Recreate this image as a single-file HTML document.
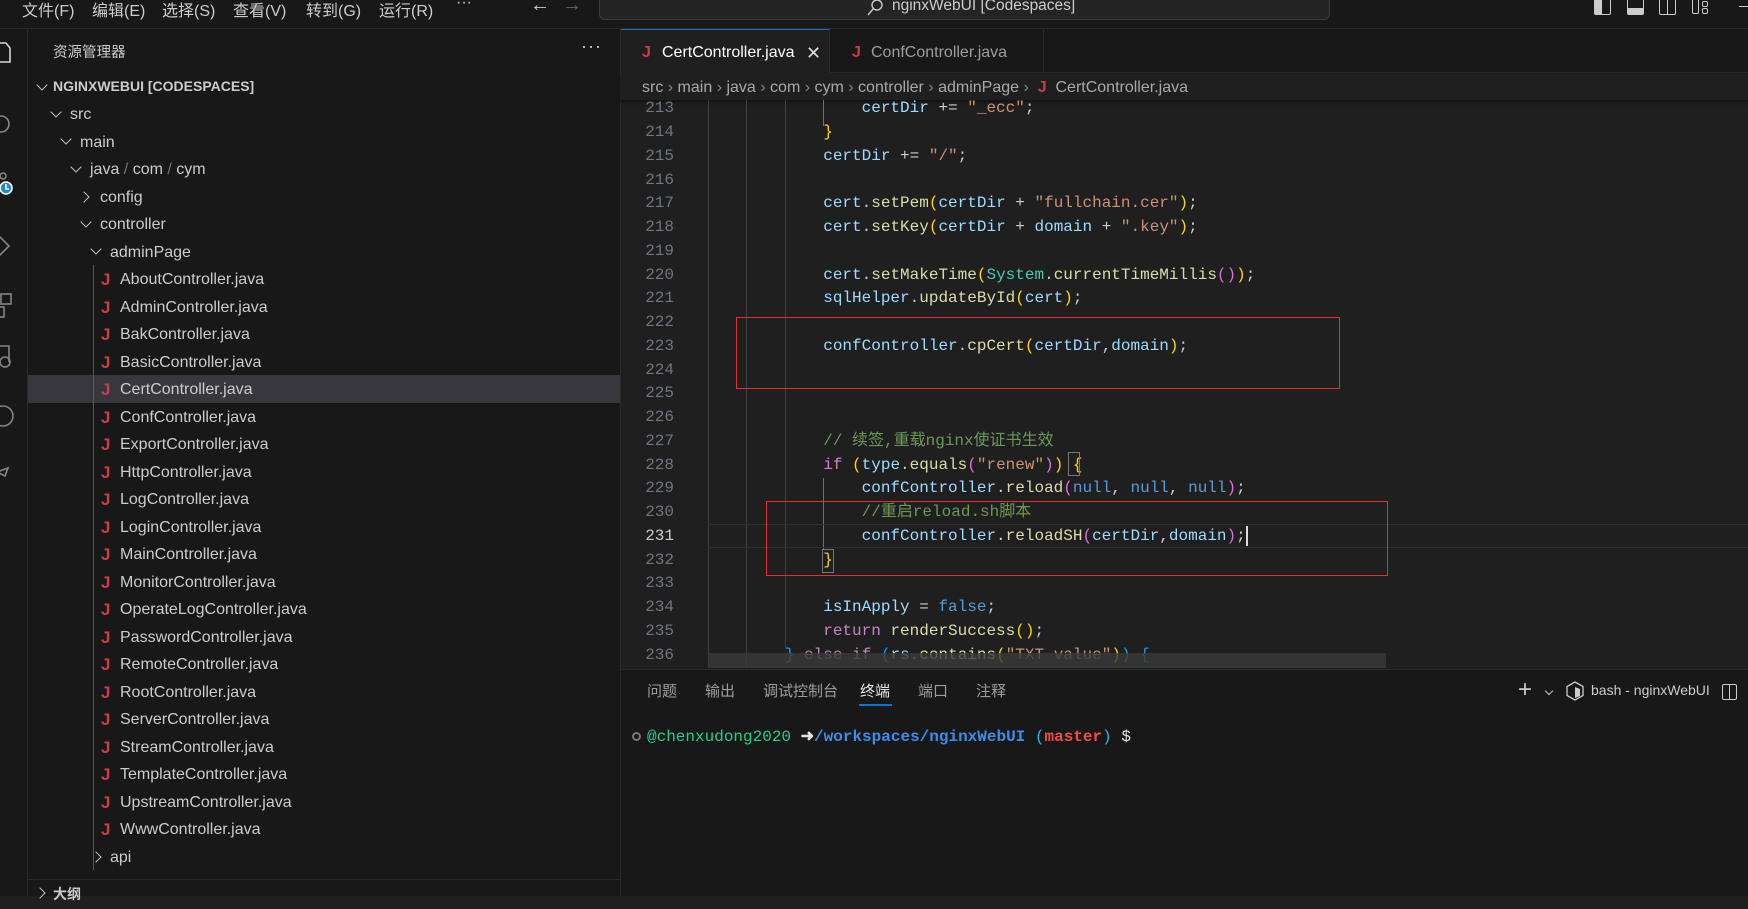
<!DOCTYPE html>
<html><head><meta charset="utf-8">
<style>
*{margin:0;padding:0;box-sizing:border-box}
body{width:1748px;height:896px;overflow:hidden;background:#1f1f1f;font-family:"Liberation Sans","Noto Sans CJK SC",sans-serif;color:#cccccc;position:relative}
.abs{position:absolute}
.title{left:0;top:0;width:1748px;height:29px;background:#181818;border-bottom:1px solid #2b2b2b}
.menu{top:-3px;font-size:16px;color:#cccccc}
.act{left:0;top:29px;width:28px;height:867px;background:#181818;border-right:1px solid #2b2b2b}
.side{left:28px;top:29px;width:593px;height:867px;background:#181818;border-right:1px solid #2b2b2b}
.row{position:absolute;height:27.5px;line-height:27.5px;font-size:16px;color:#cccccc;white-space:nowrap}
.chev{position:absolute;width:8px;height:8px;border-right:1.4px solid #c5c5c5;border-bottom:1.4px solid #c5c5c5}
.down{transform:rotate(45deg)}
.right{transform:rotate(-45deg)}
.J{color:#cc3e44;font-weight:bold;font-size:17px;position:absolute}
.tabs{left:621px;top:29px;width:1127px;height:44px;background:#181818;border-bottom:1px solid #2b2b2b}
.tab{position:absolute;top:0;height:44px;line-height:44px;font-size:16px}
.bc{left:621px;top:73px;width:1127px;height:27px;background:#1f1f1f;font-size:16px;color:#a9a9a9;line-height:29px;box-shadow:0 2px 3px #111}
.ln{position:absolute;left:630px;width:44px;text-align:right;font-family:"Liberation Mono",monospace;font-size:16px;color:#6e7681;height:23.75px;line-height:23.75px}
.cl{position:absolute;left:708px;font-family:"Liberation Mono","Noto Sans CJK SC",monospace;font-size:16px;white-space:pre;height:23.75px;line-height:23.75px;color:#cccccc}
.v{color:#9cdcfe}.f{color:#dcdcaa}.s{color:#ce9178}.k{color:#569cd6}.c{color:#c586c0}.cm{color:#6a9955}.t{color:#4ec9b0}.g{color:#ffd700}.p{color:#da70d6}.b{color:#179fff}
.guide{position:absolute;width:1px;background:#404040}
.panel{left:621px;top:669px;width:1127px;height:227px;background:#181818;border-top:1px solid #2b2b2b}
.ptab{position:absolute;top:10px;font-size:15px;color:#9d9d9d}
.term{position:absolute;top:56px;font-family:"Liberation Mono",monospace;font-size:16px;white-space:pre}
</style></head><body>
<div class="abs title"></div>
<div class="abs menu" style="left:22px">文件(F)</div>
<div class="abs menu" style="left:92px">编辑(E)</div>
<div class="abs menu" style="left:162px">选择(S)</div>
<div class="abs menu" style="left:233px">查看(V)</div>
<div class="abs menu" style="left:306px">转到(G)</div>
<div class="abs menu" style="left:379px">运行(R)</div>
<div class="abs menu" style="left:456px;top:-6px">···</div>
<div class="abs" style="left:530px;top:-6px;font-size:20px;color:#ccc">←</div>
<div class="abs" style="left:562px;top:-6px;font-size:20px;color:#666">→</div>
<div class="abs" style="left:599px;top:-6px;width:731px;height:26px;border:1px solid #3c3c3c;border-radius:6px;background:#242424"></div>
<svg class="abs" style="left:866px;top:0" width="18" height="16"><circle cx="11" cy="5" r="5" fill="none" stroke="#ccc" stroke-width="1.4"/><line x1="7" y1="9" x2="2" y2="15" stroke="#ccc" stroke-width="1.4"/></svg>
<div class="abs" style="left:892px;top:-3px;font-size:15.5px;color:#ccc">nginxWebUI [Codespaces]</div>
<div class="abs" style="left:1594px;top:-4px;width:17px;height:19px;border:1.4px solid #ccc;border-radius:2px;border-left:8px solid #ccc"></div>
<div class="abs" style="left:1627px;top:-4px;width:17px;height:19px;border:1.4px solid #ccc;border-radius:2px;border-bottom:7px solid #ccc"></div>
<div class="abs" style="left:1659px;top:-4px;width:17px;height:19px;border:1.4px solid #ccc;border-radius:2px"></div>
<div class="abs" style="left:1667px;top:-4px;width:1.4px;height:19px;background:#ccc"></div>
<div class="abs" style="left:1692px;top:-4px;width:7px;height:18px;border:1.4px solid #ccc;border-radius:2px"></div>
<div class="abs" style="left:1702px;top:1px;width:6px;height:6px;border:1.4px solid #ccc;border-radius:2px"></div>
<div class="abs" style="left:1702px;top:8px;width:6px;height:6px;border:1.4px solid #ccc;border-radius:2px"></div>
<div class="abs" style="left:1739px;top:6px;width:9px;height:1px;background:#ccc"></div>

<div class="abs act"></div>
<svg class="abs" style="left:0;top:40px" width="28" height="460" fill="none" stroke="#858585" stroke-width="1.6">
<path d="M-4 3 H6 L10 8 V22 H-4" stroke="#d7d7d7"/>
<circle cx="1" cy="84" r="8"/>
<circle cx="3" cy="136" r="3"/><circle cx="6" cy="148" r="6" fill="#1f8ad2" stroke="#fff"/><path d="M6 144 V149 H9" stroke="#fff"/>
<path d="M-2 195 L9 206 L-2 217"/>
<rect x="1" y="254" width="10" height="10"/><rect x="-4" y="267" width="8" height="10"/>
<path d="M-4 306 H9 V322"/><circle cx="5" cy="322" r="5"/>
<circle cx="3" cy="376" r="10"/>
<path d="M-3 432 L8 428 L5 436 Z"/>
</svg>

<div class="abs side"></div>
<div class="abs" style="left:53px;top:41px;font-size:14.5px;color:#ccc">资源管理器</div>
<div class="abs" style="left:581px;top:36px;font-size:18px;color:#ccc;letter-spacing:1px">···</div>
<div class="chev down" style="left:38px;top:81px"></div>
<div class="row" style="left:53px;top:73px;font-weight:bold;font-size:14px">NGINXWEBUI [CODESPACES]</div>

<div class="chev down" style="left:52px;top:108px"></div><div class="row" style="left:70px;top:101px">src</div>
<div class="chev down" style="left:62px;top:135px"></div><div class="row" style="left:80px;top:128.5px">main</div>
<div class="chev down" style="left:72px;top:163px"></div><div class="row" style="left:90px;top:156px">java <span style="color:#777">/</span> com <span style="color:#777">/</span> cym</div>
<div class="chev right" style="left:80px;top:193px"></div><div class="row" style="left:100px;top:183.5px">config</div>
<div class="chev down" style="left:82px;top:218px"></div><div class="row" style="left:100px;top:211px">controller</div>
<div class="chev down" style="left:92px;top:245px"></div><div class="row" style="left:110px;top:238.5px">adminPage</div>
<div class="abs" style="left:28px;top:375px;width:592px;height:27.5px;background:#37373d"></div>
<div class="guide" style="left:93px;top:265px;height:605px;background:#585858"></div>

<div id="files"></div>
<div class="chev right" style="left:92px;top:853px"></div><div class="row" style="left:110px;top:844px">api</div>
<div class="abs" style="left:28px;top:879px;width:593px;height:1px;background:#2b2b2b"></div>
<div class="chev right" style="left:36px;top:889px"></div><div class="row" style="left:53px;top:881px;font-weight:bold;font-size:14px">大纲</div>

<div class="abs tabs"></div>
<div class="abs" style="left:621px;top:29px;width:209px;height:45px;background:#1f1f1f;border-top:1px solid #0078d4;border-right:1px solid #2b2b2b"></div>
<div class="tab J" style="left:642px;top:31px;line-height:44px">J</div>
<div class="tab" style="left:662px;top:31px;color:#fff">CertController.java</div>
<div class="tab" style="left:806px;top:31px;color:#ddd;font-size:18px">✕</div>
<div class="abs" style="left:1043px;top:29px;width:1px;height:44px;background:#2b2b2b"></div>
<div class="tab J" style="left:852px;top:31px;line-height:44px">J</div>
<div class="tab" style="left:871px;top:31px;color:#9d9d9d">ConfController.java</div>

<div class="abs bc"><span style="position:absolute;left:21px;white-space:pre">src <span style="color:#888">›</span> main <span style="color:#888">›</span> java <span style="color:#888">›</span> com <span style="color:#888">›</span> cym <span style="color:#888">›</span> controller <span style="color:#888">›</span> adminPage <span style="color:#888">›</span>  <b style="color:#cc3e44">J</b>  CertController.java</span></div>

<div class="guide" style="left:708px;top:100px;height:568px"></div>
<div class="guide" style="left:746px;top:100px;height:568px"></div>
<div class="guide" style="left:785px;top:100px;height:548px"></div>
<div class="guide" style="left:823px;top:100px;height:26px;background:#707070"></div>
<div class="guide" style="left:823px;top:478px;height:71px;background:#707070"></div>
<div class="abs" style="left:708px;top:524px;width:1040px;height:24px;border-top:1px solid #303030;border-bottom:1px solid #303030"></div>

<div id="code"></div>

<div class="abs" style="left:708px;top:653px;width:678px;height:15px;background:#3a3a3a;opacity:.8"></div>
<div class="abs" style="left:736px;top:317px;width:604px;height:72px;border:1px solid #e03030"></div>
<div class="abs" style="left:766px;top:501px;width:622px;height:75px;border:1px solid #e03030"></div>
<div class="abs" style="left:1068px;top:452px;width:12px;height:24px;border:1px solid #777"></div>
<div class="abs" style="left:822px;top:549px;width:12px;height:24px;border:1px solid #777"></div>
<div class="abs" style="left:1246px;top:526px;width:2px;height:20px;background:#ddd"></div>

<div class="abs panel">
<div class="ptab" style="left:26px">问题</div>
<div class="ptab" style="left:84px">输出</div>
<div class="ptab" style="left:142px">调试控制台</div>
<div class="ptab" style="left:239px;color:#e7e7e7">终端</div>
<div class="abs" style="left:238px;top:34px;width:33px;height:2px;background:#0078d4"></div>
<div class="ptab" style="left:297px">端口</div>
<div class="ptab" style="left:355px">注释</div>
<div class="abs" style="left:897px;top:6px;font-size:24px;color:#ccc;font-weight:300">+</div>
<div class="chev down" style="left:925px;top:18px;width:6px;height:6px;border-width:1.2px"></div>
<svg class="abs" style="left:945px;top:11px" width="18" height="20"><path d="M9 1 L17 5.5 V14.5 L9 19 L1 14.5 V5.5 Z" fill="none" stroke="#ccc" stroke-width="1.3"/><path d="M9 6 L14 8 V15 L9 17 Z" fill="#ccc"/></svg>
<div class="ptab" style="left:970px;color:#ccc;font-size:14px;top:12px">bash - nginxWebUI</div>
<div class="abs" style="left:1101px;top:14px;width:15px;height:16px;border:1.4px solid #ccc;border-radius:2px"></div>
<div class="abs" style="left:1108px;top:14px;width:1.4px;height:16px;background:#ccc"></div>
<div class="abs" style="left:11px;top:62px;width:9px;height:9px;border-radius:50%;border:2px solid #777"></div>
<div class="term" style="left:26px"><span style="color:#23d18b">@chenxudong2020</span> <b style="color:#e5e5e5">➜</b><b style="color:#3b8eea">/workspaces/nginxWebUI</b> <span style="color:#29b8db">(</span><b style="color:#f14c4c">master</b><span style="color:#29b8db">)</span> <span style="color:#e5e5e5">$</span></div>
</div>

<script>
var files=["AboutController.java","AdminController.java","BakController.java","BasicController.java","CertController.java","ConfController.java","ExportController.java","HttpController.java","LogController.java","LoginController.java","MainController.java","MonitorController.java","OperateLogController.java","PasswordController.java","RemoteController.java","RootController.java","ServerController.java","StreamController.java","TemplateController.java","UpstreamController.java","WwwController.java"];
var h="";files.forEach(function(f,i){var t=266+i*27.5;h+='<div class="J" style="left:101px;top:'+(t+2)+'px;line-height:24px">J</div><div class="row" style="left:120px;top:'+t+'px">'+f+'</div>';});
document.getElementById("files").innerHTML=h;
var S=function(n){return " ".repeat(n)};
var L={
213:S(16)+'<span class="v">certDir</span> += <span class="s">"_ecc"</span>;',
214:S(12)+'<span class="g">}</span>',
215:S(12)+'<span class="v">certDir</span> += <span class="s">"/"</span>;',
216:'',
217:S(12)+'<span class="v">cert</span>.<span class="f">setPem</span><span class="g">(</span><span class="v">certDir</span> + <span class="s">"fullchain.cer"</span><span class="g">)</span>;',
218:S(12)+'<span class="v">cert</span>.<span class="f">setKey</span><span class="g">(</span><span class="v">certDir</span> + <span class="v">domain</span> + <span class="s">".key"</span><span class="g">)</span>;',
219:'',
220:S(12)+'<span class="v">cert</span>.<span class="f">setMakeTime</span><span class="g">(</span><span class="t">System</span>.<span class="f">currentTimeMillis</span><span class="p">()</span><span class="g">)</span>;',
221:S(12)+'<span class="v">sqlHelper</span>.<span class="f">updateById</span><span class="g">(</span><span class="v">cert</span><span class="g">)</span>;',
222:'',
223:S(12)+'<span class="v">confController</span>.<span class="f">cpCert</span><span class="g">(</span><span class="v">certDir</span>,<span class="v">domain</span><span class="g">)</span>;',
224:'',225:'',226:'',
227:S(12)+'<span class="cm">// 续签,重载nginx使证书生效</span>',
228:S(12)+'<span class="c">if</span> <span class="g">(</span><span class="v">type</span>.<span class="f">equals</span><span class="p">(</span><span class="s">"renew"</span><span class="p">)</span><span class="g">)</span> <span class="g">{</span>',
229:S(16)+'<span class="v">confController</span>.<span class="f">reload</span><span class="p">(</span><span class="k">null</span>, <span class="k">null</span>, <span class="k">null</span><span class="p">)</span>;',
230:S(16)+'<span class="cm">//重启reload.sh脚本</span>',
231:S(16)+'<span class="v">confController</span>.<span class="f">reloadSH</span><span class="p">(</span><span class="v">certDir</span>,<span class="v">domain</span><span class="p">)</span>;',
232:S(12)+'<span class="g">}</span>',
233:'',
234:S(12)+'<span class="v">isInApply</span> = <span class="k">false</span>;',
235:S(12)+'<span class="c">return</span> <span class="f">renderSuccess</span><span class="g">()</span>;',
236:S(8)+'<span class="b">}</span> <span class="c">else if</span> <span class="b">(</span><span class="v">rs</span>.<span class="f">contains</span><span class="g">(</span><span class="s">"TXT value"</span><span class="g">)</span><span class="b">)</span> <span class="b">{</span>'
};
var c="";for(var k=213;k<=236;k++){var t=121.1+(k-214)*23.75;c+='<div class="ln" style="top:'+t+'px'+(k==231?';color:#ccc':'')+'">'+k+'</div><div class="cl" style="top:'+t+'px">'+L[k]+'</div>';}
document.getElementById("code").innerHTML=c;
</script>
</body></html>
